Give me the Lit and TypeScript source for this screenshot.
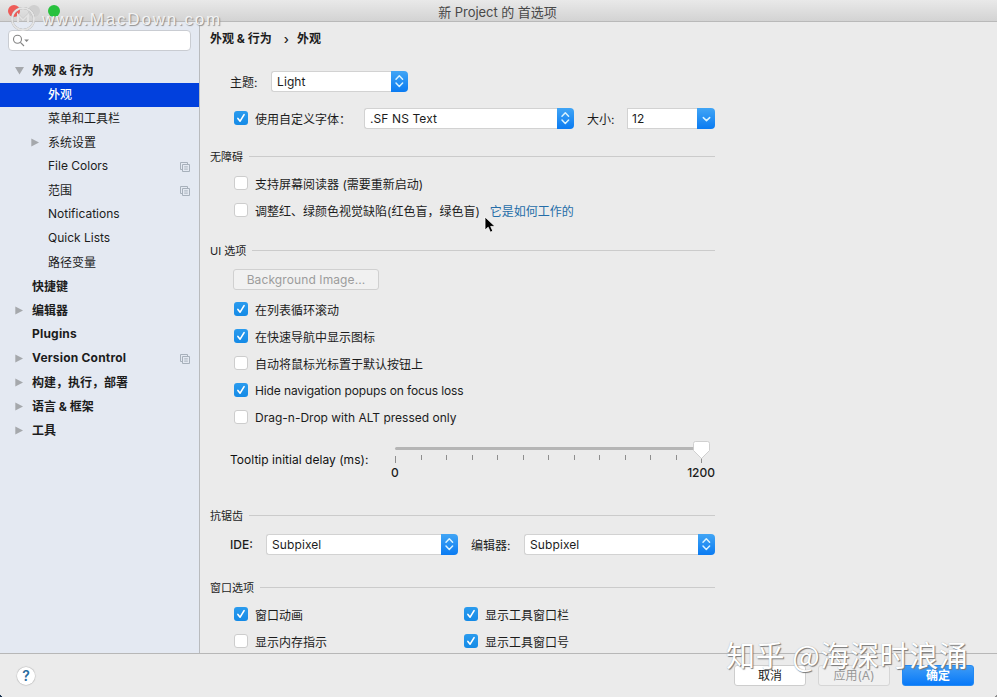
import { LitElement, html, css, svg, nothing } from "lit";
import { customElement, property } from "lit/decorators.js";

const isHan = (text: string) => /[\u4e00-\u9fff]/.test(text);

@customElement("pref-select")
class PrefSelect extends LitElement {
  @property() value = "";
  @property({ type: Boolean }) combo = false;
  static styles = css`
    :host { display: flex; height: 21px; box-sizing: border-box; flex: none; }
    .field { flex: 1; background: #fff; border: 1px solid #d2d2d2; border-right: 0; border-radius: 3px 0 0 3px; padding-left: 5px; line-height: 19px; box-sizing: border-box; white-space: nowrap; letter-spacing: 0.1px; }
    .combo { border-radius: 0; padding-left: 4px; }
    .button { width: 17px; border-radius: 0 4px 4px 0; background: linear-gradient(#41a5f5, #0a7bf2); }
    .combo + .button { width: 18px; }
    svg { display: block; width: 17px; height: 21px; margin: auto; fill: none; stroke: #d9f3ff; stroke-width: 1.5; stroke-linecap: round; stroke-linejoin: round; }
  `;
  render() {
    return html`<div class="field ${this.combo ? "combo" : ""}">${this.value}</div>
      <div class="button"><svg viewBox="0 0 17 21">${this.combo
        ? svg`<path d="M5.3 9.6 8.5 12.6 11.7 9.6"/>`
        : svg`<path d="M5 8.2 8.3 4.8 11.6 8.2M5 12 8.3 15.4 11.6 12"/>`}</svg></div>`;
  }
}

@customElement("pref-check")
class PrefCheck extends LitElement {
  @property() label = "";
  @property({ type: Boolean }) checked = false;
  static styles = css`
    :host { display: flex; align-items: center; height: 27px; }
    .box { width: 14px; height: 14px; box-sizing: border-box; border: 1px solid #cdcdcd; border-radius: 3px; background: #fff; margin: 0 7px 1px 0; flex: none; }
    .on { border: 0; background: linear-gradient(#2a9bee, #148ae6); }
    svg { display: block; width: 14px; height: 14px; fill: none; stroke: #fff; stroke-width: 1.6; stroke-linecap: round; stroke-linejoin: round; }
    .text { white-space: nowrap; }
    .han { padding-top: 2px; letter-spacing: 0; }
  `;
  render() {
    return html`<div class="box ${this.checked ? "on" : ""}">${this.checked
        ? html`<svg viewBox="0 0 14 14"><path d="M3.9 7.4 6.1 10.2 10.1 3.6"/></svg>` : nothing}</div>
      <span class="text ${isHan(this.label) ? "han" : ""}">${this.label}</span>`;
  }
}

@customElement("pref-section")
class PrefSection extends LitElement {
  @property() label = "";
  static styles = css`
    :host { display: flex; align-items: center; gap: 6px; height: 20px; font-size: 11px; width: 505px; letter-spacing: 0; }
    .text { padding-top: 2px; }
    .line { flex: 1; height: 1px; background: #cbcbcb; margin-top: 1px; }
  `;
  render() {
    return html`<span class="text">${this.label}</span><div class="line"></div>`;
  }
}

interface TreeItem { text: string; level: number; arrow?: "open" | "closed"; copy?: boolean; selected?: boolean }

const TREE: TreeItem[] = [
  { text: "外观 & 行为", level: 0, arrow: "open" },
  { text: "外观", level: 1, selected: true },
  { text: "菜单和工具栏", level: 1 },
  { text: "系统设置", level: 1, arrow: "closed" },
  { text: "File Colors", level: 1, copy: true },
  { text: "范围", level: 1, copy: true },
  { text: "Notifications", level: 1 },
  { text: "Quick Lists", level: 1 },
  { text: "路径变量", level: 1 },
  { text: "快捷键", level: 0 },
  { text: "编辑器", level: 0, arrow: "closed" },
  { text: "Plugins", level: 0 },
  { text: "Version Control", level: 0, arrow: "closed", copy: true },
  { text: "构建，执行，部署", level: 0, arrow: "closed" },
  { text: "语言 & 框架", level: 0, arrow: "closed" },
  { text: "工具", level: 0, arrow: "closed" },
];

@customElement("app-root")
class AppRoot extends LitElement {
  static styles = css`
    :host { display: flex; flex-direction: column; position: relative; width: 997px; height: 697px; overflow: hidden; background: #ebebeb; color: #1c1c1c; font: 12px/16px Inter, "Noto Sans CJK SC", sans-serif; letter-spacing: 0; box-sizing: border-box; }
    * { box-sizing: border-box; }
    .titlebar { height: 22px; flex: none; display: flex; align-items: center; justify-content: center; background: linear-gradient(#e9e9e9, #d3d3d3); border-bottom: 1px solid #b9b9b9; color: #484848; font-size: 13px; letter-spacing: -0.05px; padding: 2px 2px 0 0; position: relative; }
    .lights { position: absolute; left: 8px; top: 5px; display: flex; gap: 8px; }
    .light { width: 12px; height: 12px; border-radius: 50%; background: #ee5c58; }
    .light.min { background: #cfcfcf; }
    .light.max { background: #28c13e; }
    .body { flex: 1; min-height: 0; display: flex; }
    .sidebar { width: 200px; flex: none; background: #e4e9f2; border-right: 1px solid #b9bbbe; padding-top: 8px; }
    .search { width: 183px; height: 21px; margin: 0 0 8px 8px; background: #fff; border: 1px solid #c9ccd2; border-radius: 4px; }
    .search svg { display: block; width: 24px; height: 19px; fill: none; stroke: #848484; stroke-width: 1.1; }
    .item { height: 24px; display: flex; align-items: center; padding: 0 9px 2px 13px; white-space: nowrap; }
    .item.l0 { font-weight: 700; letter-spacing: 0.2px; }
    .item.l1 { padding-left: 29px; }
    .item.selected { background: #0140dd; color: #fff; font-weight: 500; }
    .arrow { width: 19px; display: flex; align-items: center; padding-left: 2px; padding-top: 1px; }
    .arrow svg { width: 9px; height: 9px; fill: #a5a8ac; display: block; }
    .label { flex: 1; }
    .han { padding-top: 2px; letter-spacing: 0; }
    .copy { width: 10px; height: 10px; margin-top: 1px; fill: none; stroke: #a7b0bb; stroke-width: 1; }
    .content { flex: 1; min-width: 0; overflow: hidden; padding-left: 10px; }
    .crumbs { height: 32px; display: flex; align-items: center; font-weight: 700; padding-top: 2px; }
    .crumbs .sep { margin: 0 8px 0 12px; font-weight: 500; font-size: 13px; }
    .row { display: flex; align-items: center; height: 27px; padding-left: 20px; white-space: nowrap; }
    .theme { margin-top: 14px; }
    .theme-label { width: 41px; }
    .font { margin-top: 10px; padding-left: 24px; }
    .w-theme { width: 137px; }
    .font-check { width: 130px; }
    .w-font { width: 210px; }
    .size-label { width: 40px; margin-left: 13px; }
    .w-size { width: 88px; }
    .a11y { margin-top: 14px; }
    .checks { padding-left: 24px; margin-top: 4px; }
    .pair { display: flex; gap: 10px; align-items: center; }
    .link { color: #256da8; }
    .ui { margin-top: 16px; }
    .bg-row { margin-top: 6px; padding-left: 23px; }
    .bg-button { width: 146px; height: 21px; border: 1px solid #d0d0d0; border-radius: 3px; background: #f1f1f1; color: #9c9c9c; text-align: center; line-height: 19px; letter-spacing: 0.1px; }
    .ui-checks { margin-top: 3px; }
    .tight { letter-spacing: -0.12px; }
    .slider-row { height: 74px; display: flex; padding: 21px 0 0 20px; }
    .slider-label { width: 165px; letter-spacing: 0.03px; color: #111; }
    .scale { width: 322px; margin-top: -12px; margin-left: -9px; }
    .scale svg { display: block; width: 330px; height: 24px; }
    .ends { display: flex; justify-content: space-between; width: 329px; padding: 1px 0 0 5px; line-height: 16px; font-weight: 500; }
    .aa-row { margin-top: 6px; }
    .w-ide { width: 192px; }
    .ide-label { width: 36px; font-weight: 500; }
    .editor-label { width: 53px; margin-left: 13px; }
    .w-editor { width: 191px; }
    .win { margin-top: 19px; }
    .grid { display: grid; grid-template-columns: 230px 230px; }
    .footer { height: 44px; flex: none; border-top: 1px solid #b7b7b7; display: flex; align-items: center; padding: 0 23px 0 17px; gap: 12px; }
    .help { width: 18px; height: 18px; border-radius: 50%; background: #fff; box-shadow: 0 0 1px 0.5px #bdbdbd; color: #2a6d9f; font-size: 14px; font-weight: 600; line-height: 18px; text-align: center; margin-right: auto; }
    .btn { width: 72px; height: 21px; border-radius: 3px; background: #fff; border: 1px solid #cdcdcd; text-align: center; line-height: 20px; }
    .btn.off { background: #f0f0f0; border-color: #d6d6d6; color: #989898; }
    .btn.primary { background: linear-gradient(#3f9cf6, #0879f8); border-color: #2389f3; color: #fff; font-weight: 700; }
    .cursor { position: absolute; left: 484px; top: 216px; width: 12px; height: 18px; }
    .site { position: absolute; left: 42px; top: 10px; font: 17px/20px "Liberation Sans", sans-serif; letter-spacing: 1.8px; color: #f2f2f2; text-shadow: 1px 1px 1px #8c8c8c; white-space: nowrap; }
    .site-mark { position: absolute; left: 10px; top: 6px; width: 26px; height: 26px; fill: none; stroke: #e3e3e3; stroke-width: 2; filter: drop-shadow(0.5px 0.5px 0.5px #888); }
    .author { position: absolute; left: 726px; top: 636px; font: 29px/36px "Noto Sans CJK SC", sans-serif; letter-spacing: 0.6px; color: #fff; text-shadow: 1px 1px 1px #777, 0 0 1px #aaa; white-space: nowrap; }
    .corner { position: absolute; bottom: 0; width: 4px; height: 4px; }
    .corner.left { left: 0; background: radial-gradient(circle at 100% 0, transparent 3.8px, #16304e 4px); }
    .corner.right { right: 0; background: radial-gradient(circle at 0 0, transparent 3.8px, #8b8b8b 4px); }
  `;

  item(i: TreeItem) {
    return html`<div class="item l${i.level} ${i.selected ? "selected" : ""}">
      <div class="arrow">${i.arrow ? html`<svg viewBox="0 0 9 9">${i.arrow === "open"
        ? svg`<path d="M0 1H9L4.5 8.5Z"/>` : svg`<path d="M0.3 .5V8.5L8 4.5Z"/>`}</svg>` : nothing}</div>
      <span class="label ${isHan(i.text) ? "han" : ""}">${i.text}</span>
      ${i.copy ? html`<svg class="copy" viewBox="0 0 10 10"><path d="M2 7.5H.5V.5H7.5V2M2.5 2.5H9.5V9.5H2.5ZM4.2 4.9H7.8M4.2 7.1H7.8"/></svg>` : nothing}
    </div>`;
  }

  render() {
    const ticks = Array.from({ length: 13 }, (_, n) => n);
    return html`
      <div class="titlebar">
        <div class="lights"><div class="light"></div><div class="light min"></div><div class="light max"></div></div>
        新 Project 的 首选项
      </div>
      <div class="body">
        <div class="sidebar">
          <div class="search"><svg viewBox="0 0 24 19"><circle cx="8.5" cy="8.3" r="4"/><path d="M11.4 11.3 15 15"/><path d="M15.2 8.5H20L17.6 11Z" fill="#848484" stroke="none"/></svg></div>
          ${TREE.map((i) => this.item(i))}
        </div>
        <div class="content">
          <div class="crumbs"><span>外观 &amp; 行为</span><span class="sep">›</span><span>外观</span></div>
          <div class="row theme"><span class="theme-label han">主题:</span><pref-select class="w-theme" value="Light"></pref-select></div>
          <div class="row font">
            <pref-check class="font-check" checked label="使用自定义字体："></pref-check>
            <pref-select class="w-font" value=".SF NS Text"></pref-select>
            <span class="size-label han">大小:</span>
            <pref-select class="w-size" combo value="12"></pref-select>
          </div>
          <pref-section class="a11y" label="无障碍"></pref-section>
          <div class="checks">
            <pref-check label="支持屏幕阅读器 (需要重新启动)"></pref-check>
            <div class="pair"><pref-check label="调整红、绿颜色视觉缺陷(红色盲，绿色盲)"></pref-check><span class="link han">它是如何工作的</span></div>
          </div>
          <pref-section class="ui" label="UI 选项"></pref-section>
          <div class="row bg-row"><div class="bg-button">Background Image...</div></div>
          <div class="checks ui-checks">
            <pref-check checked label="在列表循环滚动"></pref-check>
            <pref-check checked label="在快速导航中显示图标"></pref-check>
            <pref-check label="自动将鼠标光标置于默认按钮上"></pref-check>
            <pref-check class="tight" checked label="Hide navigation popups on focus loss"></pref-check>
            <pref-check label="Drag-n-Drop with ALT pressed only"></pref-check>
          </div>
          <div class="slider-row">
            <span class="slider-label">Tooltip initial delay (ms):</span>
            <div class="scale">
              <svg viewBox="0 0 330 24">
                <rect x="9" y="7" width="306" height="3" rx="1.5" fill="#b5b5b5"/>
                ${ticks.map((n) => svg`<rect x=${Math.round(9 + n * 25.5)} y=${n % 12 ? 15 : 16} width="1" height=${n % 12 ? 5 : 7} fill="#8e8e8e"/>`)}
                <path d="M307.5 3.5Q307.5 1.5 309.5 1.5H321.5Q323.5 1.5 323.5 3.5V10.5L315.5 18.5L307.5 10.5Z" fill="#fff" stroke="#c6c6c6" stroke-width=".8"/>
              </svg>
              <div class="ends"><span>0</span><span>1200</span></div>
            </div>
          </div>
          <pref-section label="抗锯齿"></pref-section>
          <div class="row aa-row">
            <span class="ide-label">IDE:</span><pref-select class="w-ide" value="Subpixel"></pref-select>
            <span class="editor-label han">编辑器:</span><pref-select class="w-editor" value="Subpixel"></pref-select>
          </div>
          <pref-section class="win" label="窗口选项"></pref-section>
          <div class="checks grid">
            <pref-check checked label="窗口动画"></pref-check><pref-check checked label="显示工具窗口栏"></pref-check>
            <pref-check label="显示内存指示"></pref-check><pref-check checked label="显示工具窗口号"></pref-check>
          </div>
        </div>
      </div>
      <div class="footer">
        <div class="help">?</div>
        <div class="btn">取消</div><div class="btn off">应用(A)</div><div class="btn primary">确定</div>
      </div>
      <svg class="cursor" viewBox="0 0 12 18"><path d="M1 1V14L4.2 11.2L6.4 16.2L8.8 15.1L6.7 10.4H11Z" fill="#000" stroke="#fff" stroke-width=".8"/></svg>
      <svg class="site-mark" viewBox="0 0 26 26"><circle cx="13" cy="13" r="11"/><path d="M8 17V9L13 14L18 9V17"/></svg>
      <div class="site">www.MacDown.com</div>
      <div class="author">知乎 @海深时浪涌</div>
      <div class="corner left"></div><div class="corner right"></div>
    `;
  }
}
